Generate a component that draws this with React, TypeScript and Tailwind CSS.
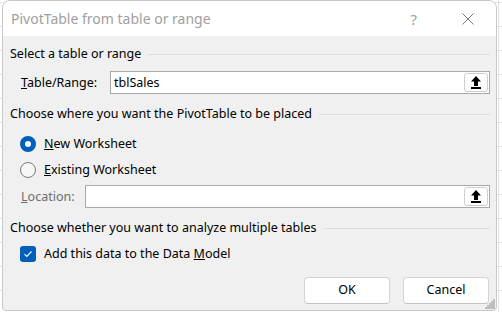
import React from "react";

const font = "font-['Noto_Sans','Open_Sans',sans-serif]";

function UploadIcon() {
  return (
    <svg width="10" height="14" viewBox="0 0 10 14">
      <polygon points="5,0 10,5.5 7,5.5 7,10 3,10 3,5.5 0,5.5" fill="#000" />
      <rect x="0" y="11" width="10" height="2" fill="#000" />
    </svg>
  );
}

function Heading({ text }: { text: string }) {
  return (
    <div className="flex items-center h-[16px]">
      <span className="text-[12.5px] leading-[16px] text-[#000] whitespace-nowrap">{text}</span>
      <div className="flex-1 h-px bg-[#dcdcdc] ml-[7px] mr-0" />
    </div>
  );
}

function Field({ label, value, labelW, disabled }: { label: React.ReactNode; value: string; labelW: string; disabled?: boolean }) {
  return (
    <div className="flex items-center h-[23px] pl-[11px]">
      <div className={`${labelW} text-[12.5px] leading-[16px] ${disabled ? "text-[#6d6d6d]" : "text-black"}`}>{label}</div>
      <div className="flex-1 h-[23px] bg-white border border-[#a9a9a9] flex items-center pl-[3px] pr-px">
        <span className="flex-1 text-[12.5px] leading-[16px] text-black">{value}</span>
        <div className="w-[24px] h-[19px] border border-[#cfcfcf] rounded-[3px] bg-white flex items-center justify-center">
          <UploadIcon />
        </div>
      </div>
    </div>
  );
}

export default function App() {
  return (
    <div className={`w-[502px] h-[312px] bg-white flex ${font} bg-[linear-gradient(to_bottom,#e3e3e3_1px,transparent_1px)] bg-[length:100%_24px] bg-[position:0_2px]`}>
      <div className="w-[2px]" />
      <div className="relative w-[495px] h-[311px] border border-[#c9c9c9] rounded-t-[8px] rounded-b-[4px] overflow-hidden flex flex-col bg-[#f0f0f0]">
        <div className="h-[35px] bg-white flex items-center pl-[8px]">
          <span className="text-[14px] leading-[20px] text-[#a0a0a0] flex-1">PivotTable from table or range</span>
          <span className="text-[15px] leading-[20px] text-[#a0a0a0] mr-[45px]">?</span>
          <svg width="12" height="12" viewBox="0 0 12 12" className="mr-[22px]">
            <path d="M0.5 0.5 L11.5 11.5 M11.5 0.5 L0.5 11.5" stroke="#7a7a7a" strokeWidth="1" />
          </svg>
        </div>
        <div className="flex-1 flex flex-col pl-[7px] pr-[6px] pt-[10px]">
          <Heading text="Select a table or range" />
          <div className="mt-[9px]">
            <Field labelW="w-[89px]" label={<span><u>T</u>able/Range:</span>} value="tblSales" />
          </div>
          <div className="mt-[12px]">
            <Heading text="Choose where you want the PivotTable to be placed" />
          </div>
          <div className="mt-[14px] flex items-center h-[16px] pl-[10px]">
            <div className="w-[16px] h-[16px] rounded-full bg-[#005fb8] flex items-center justify-center">
              <div className="w-[6px] h-[6px] rounded-full bg-white" />
            </div>
            <span className="ml-[8px] text-[12.5px] leading-[16px] text-black"><u>N</u>ew Worksheet</span>
          </div>
          <div className="mt-[10px] flex items-center h-[16px] pl-[10px]">
            <div className="w-[16px] h-[16px] rounded-full border border-[#7a7a7a] bg-[#f7f7f7]" />
            <span className="ml-[8px] text-[12.5px] leading-[16px] text-black"><u>E</u>xisting Worksheet</span>
          </div>
          <div className="mt-[7px]">
            <Field labelW="w-[64px]" disabled label={<span><u>L</u>ocation:</span>} value="" />
          </div>
          <div className="mt-[12px]">
            <Heading text="Choose whether you want to analyze multiple tables" />
          </div>
          <div className="mt-[10px] flex items-center h-[16px] pl-[10px]">
            <div className="w-[16px] h-[16px] rounded-[3px] bg-[#005fb8] flex items-center justify-center">
              <svg width="10" height="8" viewBox="0 0 10 8">
                <path d="M1.5 4.2 L3.8 6.4 L8.5 1.5" fill="none" stroke="#fff" strokeWidth="1.1" />
              </svg>
            </div>
            <span className="ml-[8px] text-[12.5px] leading-[16px] text-black">Add this data to the Data <u>M</u>odel</span>
          </div>
          <div className="mt-[15px] flex justify-end gap-[13px] pr-px">
            <button className="w-[86px] h-[27px] bg-white border border-[#d3d3d3] border-b-[#c2c2c2] rounded-[4px] text-[12.5px] text-black">OK</button>
            <button className="w-[86px] h-[27px] bg-white border border-[#d3d3d3] border-b-[#c2c2c2] rounded-[4px] text-[12.5px] text-black">Cancel</button>
          </div>
        </div>
        <svg width="10" height="10" viewBox="0 0 10 10" className="absolute right-[1px] bottom-[1px]">
          {[[8, 0], [6, 2], [8, 2], [4, 4], [6, 4], [8, 4], [2, 6], [4, 6], [6, 6], [8, 6], [0, 8], [2, 8], [4, 8], [6, 8], [8, 8]].map(([x, y], i) => (
            <rect key={i} x={x} y={y} width="2" height="2" fill="#bdbdbd" />
          ))}
        </svg>
      </div>
      <div className="flex-1 ml-px border-l border-[#e3e3e3]" />
    </div>
  );
}
